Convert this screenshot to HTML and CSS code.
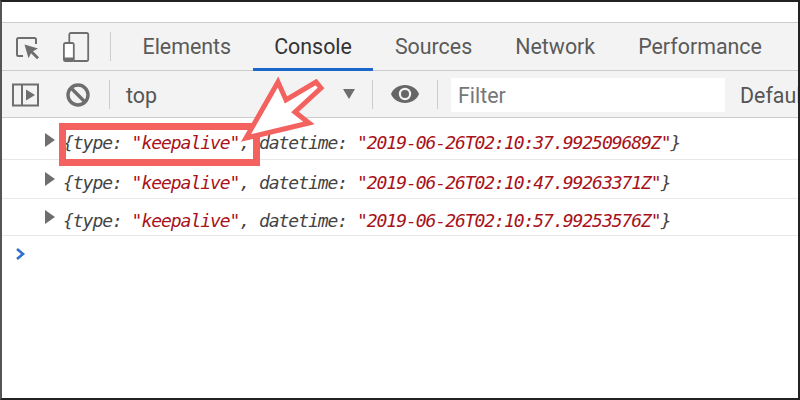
FILE: index.html
```html
<!DOCTYPE html>
<html lang="en">
<head>
<meta charset="utf-8">
<title>Console</title>
<link rel="stylesheet" href="styles.css">
</head>
<body>
<div class="frame">
  <div class="topgap"></div>
  <div class="tabbar">
    <svg class="icon inspect" width="28" height="28" viewBox="0 0 28 28"><path d="M9 23H4.500a1.500 1.500 0 0 1-1.500-1.500V6.500A1.500 1.500 0 0 1 4.500 5h16a1.500 1.500 0 0 1 1.500 1.500V11" fill="none" stroke="#6e6e6e" stroke-width="2"/><path d="M10.500 11.500 24 15.500l-5 2.800 6 6-2 2-6-6-2.500 5z" fill="#6e6e6e"/></svg>
    <svg class="icon device" width="27" height="30" viewBox="0 0 30 30" preserveAspectRatio="none"><path d="M7 10V2.500A1.500 1.500 0 0 1 8.500 1h18A1.500 1.500 0 0 1 28 2.500v25a1.500 1.500 0 0 1-1.500 1.500H12" fill="none" stroke="#6e6e6e" stroke-width="2"/><path d="M2.500 11h8a1.500 1.500 0 0 1 1.500 1.500v15a1.500 1.500 0 0 1-1.500 1.500h-8A1.500 1.500 0 0 1 1 27.500v-15A1.500 1.500 0 0 1 2.500 11z" fill="#fff" stroke="#6e6e6e" stroke-width="2"/><rect x="1" y="25.500" width="11" height="3.500" fill="#6e6e6e"/></svg>
    <span class="sep"></span>
    <nav class="tabs">
      <span class="tab">Elements</span>
      <span class="tab active">Console</span>
      <span class="tab">Sources</span>
      <span class="tab">Network</span>
      <span class="tab">Performance</span>
    </nav>
  </div>
  <div class="toolbar">
    <svg class="icon sidebar" width="28" height="24" viewBox="0 0 28 24"><rect x="1" y="1.500" width="25" height="21" fill="none" stroke="#6e6e6e" stroke-width="2"/><path d="M10 1.500v21" stroke="#6e6e6e" stroke-width="2"/><path d="M14 6.500 23 12l-9 5.500z" fill="#6e6e6e"/></svg>
    <svg class="icon clear" width="26" height="26" viewBox="0 0 26 26"><circle cx="13" cy="13" r="10" fill="none" stroke="#6e6e6e" stroke-width="3.400"/><path d="M6 6l14 14" stroke="#6e6e6e" stroke-width="3.400"/></svg>
    <span class="sep"></span>
    <span class="context">top</span>
    <span class="caret"></span>
    <span class="sep"></span>
    <svg class="icon eye" width="30" height="20" viewBox="0 0 30 20"><path d="M15 1C8.500 1 3.200 4.700 1 10c2.200 5.300 7.500 9 14 9s11.800-3.700 14-9c-2.200-5.300-7.500-9-14-9z" fill="#666"/><circle cx="15" cy="10" r="6.200" fill="#f3f3f3"/><circle cx="15" cy="10" r="4" fill="#666"/></svg>
    <span class="sep"></span>
    <div class="filter">Filter</div>
    <span class="levels">Default levels</span>
  </div>
  <main class="console">
    <div class="row first"><span class="tri"></span><span class="msg">{type: <b class="str">"keepalive"</b>, datetime: <b class="str">"2019-06-26T02:10:37.992509689Z"</b>}</span></div>
    <div class="row"><span class="tri"></span><span class="msg">{type: <b class="str">"keepalive"</b>, datetime: <b class="str">"2019-06-26T02:10:47.99263371Z"</b>}</span></div>
    <div class="row last"><span class="tri"></span><span class="msg">{type: <b class="str">"keepalive"</b>, datetime: <b class="str">"2019-06-26T02:10:57.99253576Z"</b>}</span></div>
    <div class="prompt"><svg width="12" height="14" viewBox="0 0 12 14"><path d="M2 2l6 5-6 5" fill="none" stroke="#2f6fd0" stroke-width="2.600"/></svg></div>
  </main>
  <div class="callout-box"></div>
  <svg class="callout-arrow" width="100" height="84" viewBox="0 0 100 84"><path d="M12 68 44 12 52 30 82 12 87 18 61 42 75 53z" fill="#fff" stroke="#f4625f" stroke-width="5" stroke-miterlimit="10"/></svg>
</div>
</body>
</html>
```
FILE: styles.css
```css
* { box-sizing: border-box; }
html, body { margin: 0; padding: 0; }
body { width: 800px; height: 400px; overflow: hidden; background: #fff; }
.frame {
  position: relative;
  width: 800px;
  height: 400px;
  border: 2px solid #222;
  border-left-color: #555;
  overflow: hidden;
  background: #fff;
  font-family: Roboto, "Liberation Sans", sans-serif;
}
.topgap { height: 20px; }
.tabbar {
  display: flex;
  align-items: center;
  height: 49px;
  padding-left: 12px;
  background: #f3f3f3;
  border-top: 1px solid #ccc;
  border-bottom: 1px solid #ccc;
  white-space: nowrap;
}
.icon { flex: none; display: block; }
.device { margin-left: 21px; }
.sep { flex: none; width: 1px; height: 29px; background: #ccc; }
.tabbar .sep { margin-left: 20px; }
.tabs { display: flex; height: 100%; margin-left: 10px; }
.tab {
  display: flex;
  flex: none;
  align-items: center;
  padding: 2px 21.500px 0;
  font-size: 21.400px;
  color: #5a5a5a;
  border-bottom: 3px solid transparent;
  margin-bottom: -1px;
}
.tab.active { color: #333; border-bottom-color: #1a66c9; }
.toolbar {
  display: flex;
  align-items: center;
  height: 47px;
  padding: 2px 0 0 10px;
  background: #f3f3f3;
  border-bottom: 1px solid #ccc;
  white-space: nowrap;
}
.clear { margin-left: 25px; }
.toolbar .sep { margin-left: 18px; margin-top: -2px; flex: none; }
.context { flex: none; margin-left: 16px; width: 217px; font-size: 21.400px; color: #555; }
.caret {
  flex: none;
  width: 0;
  height: 0;
  border-left: 6px solid transparent;
  border-right: 6px solid transparent;
  border-top: 10px solid #6e6e6e;
  margin-top: -2px;
}
.toolbar .caret + .sep { margin-left: 17px; }
.eye { margin-left: 17px; margin-top: -2px; }
.toolbar .eye + .sep { margin-left: 17px; }
.filter {
  flex: none;
  width: 274px;
  height: 34px;
  margin-left: 13px;
  padding-left: 7px;
  line-height: 35px;
  background: #fff;
  font-size: 21.400px;
  color: #777;
}
.levels { flex: none; margin-left: 15px; font-size: 21.400px; color: #555; }
.row {
  display: flex;
  align-items: center;
  height: 39px;
  padding-left: 43px;
  padding-top: 6px;
  border-bottom: 1px solid #e8e8e8;
}
.row.first { height: 42px; padding-top: 8px; }
.row.last { height: 37px; padding-top: 6px; }
.tri {
  flex: none;
  width: 0;
  height: 0;
  border-top: 7px solid transparent;
  border-bottom: 7px solid transparent;
  border-left: 10px solid #6e6e6e;
  margin-top: -6px;
}
.msg {
  margin-left: 8px;
  font-family: "DejaVu Sans Mono", monospace;
  font-size: 18px;
  letter-spacing: -1.040px;
  font-style: italic;
  color: #444;
  white-space: nowrap;
}
.str { font-weight: normal; color: #a8121a; }
.prompt { padding: 11px 0 0 13px; }
.prompt svg { display: block; }
.callout-box {
  position: absolute;
  left: 57px;
  top: 121px;
  width: 201px;
  height: 43px;
  border: 7px solid #f4625f;
}
.callout-arrow { position: absolute; left: 232px; top: 68px; }
```
